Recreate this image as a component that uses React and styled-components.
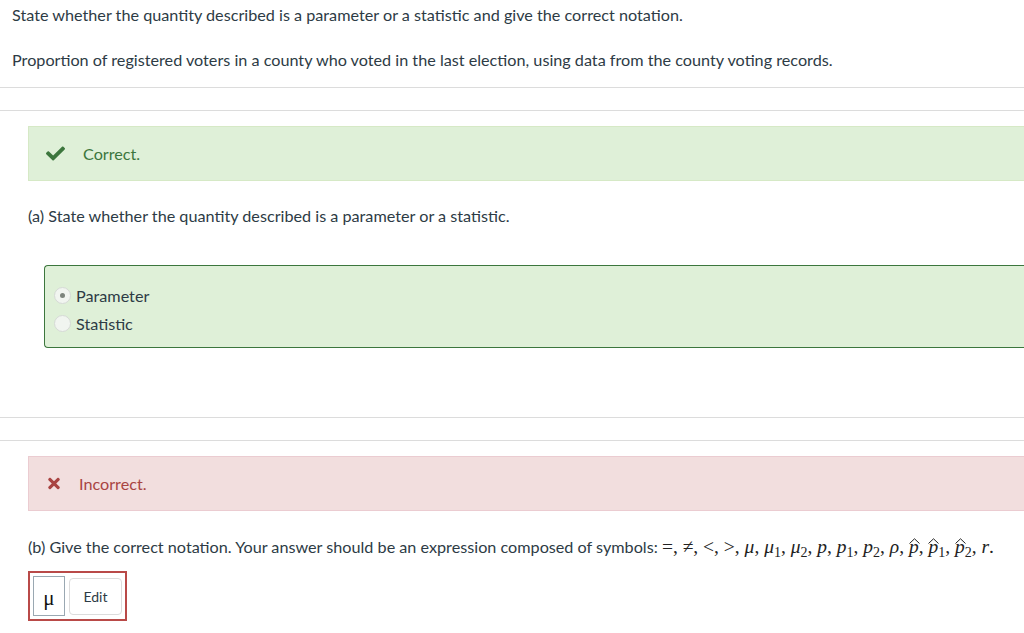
import React from 'react';
import styled, { createGlobalStyle } from 'styled-components';
import { FaCheck, FaTimes } from 'react-icons/fa';

const Global = createGlobalStyle`
  html, body {
    margin: 0;
    padding: 0;
    background: #fff;
    overflow: hidden;
  }
  body {
    font-family: Lato, "Open Sans", sans-serif;
    font-size: 16.2px;
    color: #2d3b45;
  }
`;

const Page = styled.div`
  width: 1024px;
  height: 633px;
  overflow: hidden;
`;

const Intro = styled.div`
  padding: 4px 12px 0;
`;

const Para = styled.p`
  margin: 0 0 ${(p) => p.$gap || 0}px;
  line-height: 21px;
`;

const Rule = styled.hr`
  margin: 0;
  border: 0;
  border-top: 1px solid #dcdcdc;
  height: 0;
`;

const Rules = styled.div`
  display: flex;
  flex-direction: column;
  gap: 22px;
  margin-top: ${(p) => p.$top}px;
`;

const Section = styled.div`
  padding-left: 28px;
  margin-right: -20px;
`;

const Alert = styled.div`
  display: flex;
  align-items: center;
  height: 53px;
  margin-top: ${(p) => p.$top}px;
  padding-left: 17px;
  background: ${(p) => (p.$ok ? '#dff0d8' : '#f2dede')};
  border: 1px solid ${(p) => (p.$ok ? '#d6e9c6' : '#ebccd1')};
  color: ${(p) => (p.$ok ? '#3c763d' : '#a94442')};
`;

const AlertIcon = styled.span`
  display: inline-flex;
  width: ${(p) => p.$w}px;
  margin-right: ${(p) => p.$mr}px;
  font-size: ${(p) => p.$size}px;
`;

const Question = styled.p`
  margin: ${(p) => p.$top}px 0 0;
  line-height: 21px;
  white-space: nowrap;
`;

const Choices = styled.div`
  margin: 39px 0 0 16px;
  height: 83px;
  background: #dff0d8;
  border: 1px solid #3c763d;
  border-right: 0;
  border-radius: 4px 0 0 4px;
  padding: 15px 0 0 9px;
  box-sizing: border-box;
`;

const Choice = styled.label`
  display: flex;
  align-items: center;
  height: 28px;
  gap: 5px;
`;

const Radio = styled.span`
  width: 17px;
  height: 17px;
  border-radius: 50%;
  background: #f1f5f0;
  border: 1px solid #d6dad6;
  box-sizing: border-box;
  display: inline-flex;
  align-items: center;
  justify-content: center;
  &::after {
    content: '';
    width: 5px;
    height: 5px;
    border-radius: 50%;
    background: ${(p) => (p.$on ? '#7d857d' : 'transparent')};
  }
`;

const Mth = styled.span`
  font-family: "Liberation Serif", "DejaVu Serif", serif;
  font-size: 19.5px;
  font-style: ${(p) => (p.$i ? 'italic' : 'normal')};
  color: #222;
`;

const Sub = styled.sub`
  font-style: normal;
  font-size: 14px;
  vertical-align: -4px;
  line-height: 0;
`;

const HatBase = styled.span`
  position: relative;
  display: inline-block;
`;

const HatSvg = styled.svg`
  position: absolute;
  left: 0;
  top: 2px;
  width: 11px;
  height: 6px;
  overflow: visible;
`;

const AnswerWrap = styled.div`
  display: inline-flex;
  align-items: center;
  gap: 4px;
  margin-top: 14px;
  padding: 3px;
  border: 2px solid #b94a48;
`;

const MathInput = styled.div`
  width: 32px;
  height: 40px;
  border: 1px solid #9aa8b2;
  display: flex;
  align-items: center;
  justify-content: center;
  font-family: "Liberation Serif", "DejaVu Serif", serif;
  font-size: 21px;
  color: #111;
  padding-top: 4px;
  box-sizing: border-box;
`;

const EditBtn = styled.button`
  height: 37px;
  width: 53px;
  border: 1px solid #dcdcdc;
  border-radius: 4px;
  background: #fff;
  font-family: Lato, sans-serif;
  font-size: 14px;
  color: #2d3b45;
  padding: 0;
`;

const Sym = ({ s, sub, hat }) => (
  <Mth $i>
    {hat ? (
      <HatBase>
        <HatSvg viewBox="0 0 11 6">
          <polyline points="0.5,5.5 5.5,0.8 10.5,5.5" fill="none" stroke="#222" strokeWidth="1" />
        </HatSvg>
        {s}
      </HatBase>
    ) : (
      s
    )}
    {sub && <Sub>{sub}</Sub>}
  </Mth>
);

const symbols = [
  { s: 'μ' },
  { s: 'μ', sub: '1' },
  { s: 'μ', sub: '2' },
  { s: 'p' },
  { s: 'p', sub: '1' },
  { s: 'p', sub: '2' },
  { s: 'ρ' },
  { s: 'p', hat: true },
  { s: 'p', sub: '1', hat: true },
  { s: 'p', sub: '2', hat: true },
];

export default function App() {
  return (
    <Page>
      <Global />
      <Intro>
        <Para $gap={24}>
          State whether the quantity described is a parameter or a statistic and give the correct notation.
        </Para>
        <Para>
          Proportion of registered voters in a county who voted in the last election, using data from the county voting records.
        </Para>
      </Intro>
      <Rules $top={17}>
        <Rule />
        <Rule />
      </Rules>
      <Section>
        <Alert $ok $top={15}>
          <AlertIcon $w={20} $mr={17} $size={19}>
            <FaCheck />
          </AlertIcon>
          Correct.
        </Alert>
        <Question $top={24}>(a) State whether the quantity described is a parameter or a statistic.</Question>
        <Choices>
          <Choice>
            <Radio $on />
            Parameter
          </Choice>
          <Choice>
            <Radio />
            Statistic
          </Choice>
        </Choices>
      </Section>
      <Rules $top={69}>
        <Rule />
        <Rule />
      </Rules>
      <Section>
        <Alert $top={15}>
          <AlertIcon $w={16} $mr={17} $size={17}>
            <FaTimes />
          </AlertIcon>
          Incorrect.
        </Alert>
        <Question $top={25}>
          (b) Give the correct notation. Your answer should be an expression composed of symbols:{' '}
          <Mth>=, ≠, &lt;, &gt;, </Mth>
          {symbols.map((x, i) => (
            <React.Fragment key={i}>
              <Sym {...x} />
              <Mth>, </Mth>
            </React.Fragment>
          ))}
          <Mth $i>r</Mth>
          <Mth>.</Mth>
        </Question>
        <AnswerWrap>
          <MathInput>μ</MathInput>
          <EditBtn>Edit</EditBtn>
        </AnswerWrap>
      </Section>
    </Page>
  );
}
